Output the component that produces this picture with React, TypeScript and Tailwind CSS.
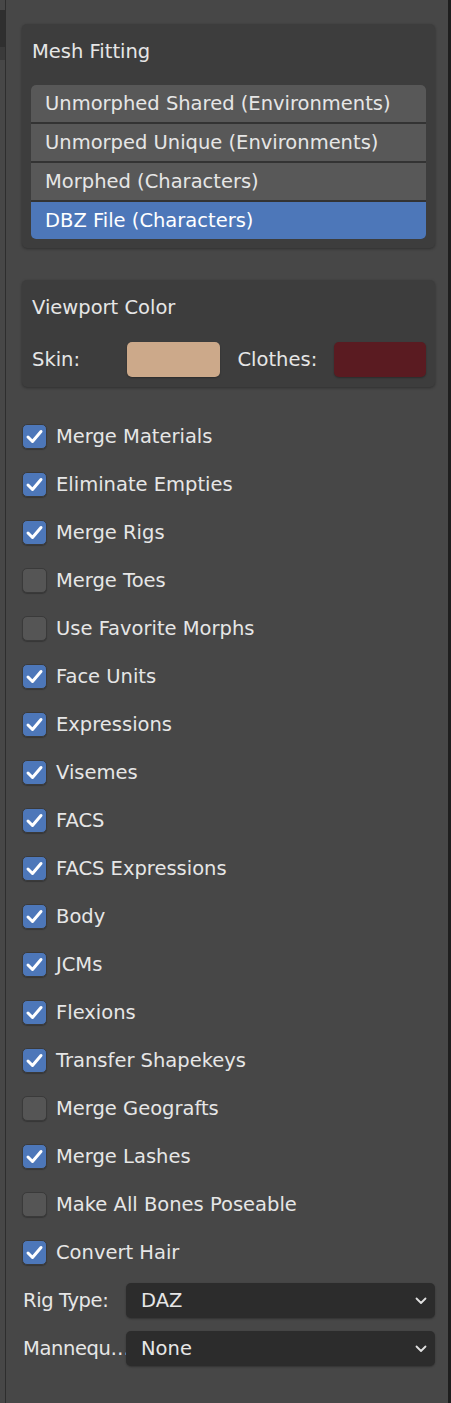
import React from "react";

const checks: [string, boolean][] = [
  ["Merge Materials", true],
  ["Eliminate Empties", true],
  ["Merge Rigs", true],
  ["Merge Toes", false],
  ["Use Favorite Morphs", false],
  ["Face Units", true],
  ["Expressions", true],
  ["Visemes", true],
  ["FACS", true],
  ["FACS Expressions", true],
  ["Body", true],
  ["JCMs", true],
  ["Flexions", true],
  ["Transfer Shapekeys", true],
  ["Merge Geografts", false],
  ["Merge Lashes", true],
  ["Make All Bones Poseable", false],
  ["Convert Hair", true],
];

const items = [
  "Unmorphed Shared (Environments)",
  "Unmorped Unique (Environments)",
  "Morphed (Characters)",
  "DBZ File (Characters)",
];

function Check({ on }: { on: boolean }) {
  return (
    <div
      className={
        "w-[25px] h-[25px] rounded-[5px] border border-[#3a3a3a] flex items-center justify-center shadow-[0_1px_1px_rgba(0,0,0,0.25)] " +
        (on ? "bg-[#4d77b9]" : "bg-[#555555]")
      }
    >
      {on && (
        <svg width="21" height="21" viewBox="0 0 21 21">
          <polyline
            points="4,11 8.5,15.5 17,5.5"
            fill="none"
            stroke="#ffffff"
            strokeWidth="3"
            strokeLinecap="round"
            strokeLinejoin="round"
          />
        </svg>
      )}
    </div>
  );
}

function Chevron() {
  return (
    <svg width="12" height="8" viewBox="0 0 12 8">
      <polyline
        points="1.5,1.5 6,6 10.5,1.5"
        fill="none"
        stroke="#e0e0e0"
        strokeWidth="1.8"
        strokeLinecap="round"
        strokeLinejoin="round"
      />
    </svg>
  );
}

function Dropdown({ label, value }: { label: string; value: string }) {
  return (
    <div className="flex items-center h-[35px]">
      <div className="w-[104px] flex-none pl-[1px] pt-[1px] whitespace-nowrap text-[19.5px] tracking-[-0.4px]">{label}</div>
      <div className="flex-1 h-[35px] rounded-[5px] bg-[#2c2c2c] shadow-[0_1px_2px_rgba(0,0,0,0.3)] flex items-center pl-[15px] pr-[8px]">
        <span className="flex-1 text-[19.5px] pt-[1px]">{value}</span>
        <Chevron />
      </div>
    </div>
  );
}

export default function App() {
  return (
    <div className="w-[451px] h-[1403px] bg-[#474747] flex text-[#e6e6e6] font-['DejaVu_Sans',sans-serif] leading-[26px] overflow-hidden">
      <div className="w-[6px] flex flex-col border-r border-[#2e2e2e]">
        <div className="h-[10px]" />
        <div className="h-[38px] bg-[#2f2f2f] border-b border-[#3a3a3a]" />
        <div className="h-[12px] bg-[#3a3a3a]" />
      </div>
      <div className="flex-1 flex flex-col pl-[16px] pr-[13px]">
        <div className="mt-[24px] rounded-[5px] bg-[#3d3d3d] shadow-[0_1px_3px_rgba(0,0,0,0.35)] pt-[15px] pb-[9px] px-[9px]">
          <div className="text-[19.5px] pl-[1px]">Mesh Fitting</div>
          <div className="mt-[20px] rounded-[5px] overflow-hidden flex flex-col gap-[2px] bg-[#333333]">
            {items.map((t, i) => (
              <div
                key={t}
                className={
                  "h-[37px] flex items-center pl-[14px] pt-[1px] text-[19.5px] " +
                  (i === 3 ? "bg-[#4d77b9] text-white" : "bg-[#585858]")
                }
              >
                {t}
              </div>
            ))}
          </div>
        </div>

        <div className="mt-[32px] rounded-[5px] bg-[#3d3d3d] shadow-[0_1px_3px_rgba(0,0,0,0.35)] pt-[15px] pb-[10px] px-[9px]">
          <div className="text-[19.5px] pl-[1px]">Viewport Color</div>
          <div className="mt-[21px] flex items-center h-[35px]">
            <div className="w-[96px] text-[19.5px] pl-[1px] pt-[1px]">Skin:</div>
            <div className="flex-1 h-[35px] rounded-[5px] bg-[#cca98a] shadow-[0_1px_2px_rgba(0,0,0,0.3)]" />
            <div className="w-[96px] ml-[18px] text-[19.5px] pt-[1px]">Clothes:</div>
            <div className="flex-1 h-[35px] rounded-[5px] bg-[#5a1b21] shadow-[0_1px_2px_rgba(0,0,0,0.3)]" />
          </div>
        </div>

        <div className="mt-[25px] flex flex-col">
          {checks.map(([t, on]) => (
            <div key={t} className="h-[48px] flex items-center gap-[9px]">
              <Check on={on} />
              <span className="text-[19.5px] pt-[2px]">{t}</span>
            </div>
          ))}
        </div>

        <div className="mt-[7px] flex flex-col gap-[13px]">
          <Dropdown label="Rig Type:" value="DAZ" />
          <Dropdown label="Mannequ…" value="None" />
        </div>
      </div>
      <div className="w-[3px] bg-[#1e1e1e]" />
    </div>
  );
}
